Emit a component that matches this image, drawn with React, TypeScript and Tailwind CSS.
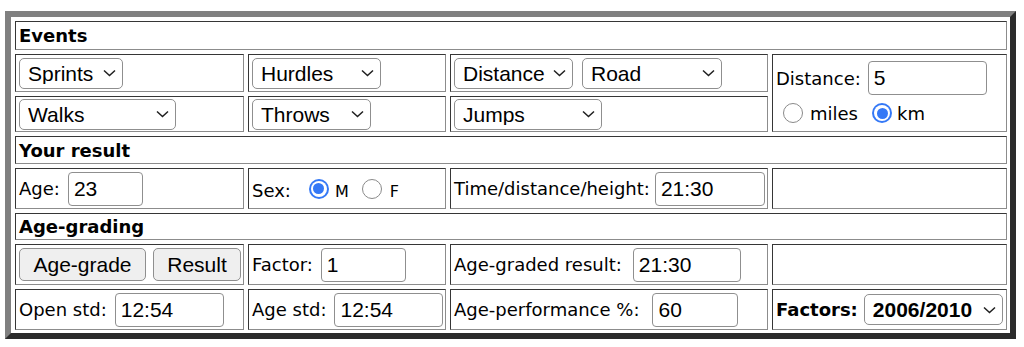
import React from "react";

const LABEL = "font-['DejaVu_Sans',Verdana,sans-serif] text-[18px] text-black whitespace-nowrap";
const CTRL = "font-['Liberation_Sans',Arial,sans-serif] text-[21px] text-black";
const CELL =
  "flex items-center border border-t-[#363636] border-l-[#363636] border-r-[#8c8c8c] border-b-[#8c8c8c] bg-white pl-[3px]";

function Chevron() {
  return (
    <svg
      width="13"
      height="8"
      viewBox="0 0 13 8"
      className="pointer-events-none absolute right-[7px] top-1/2 -translate-y-1/2"
    >
      <polyline points="1,1.5 6.5,6.5 12,1.5" fill="none" stroke="#1f1f1f" strokeWidth="1.5" />
    </svg>
  );
}

function Select({ value, options, className }: { value: string; options: string[]; className: string }) {
  return (
    <span className={`relative inline-flex h-[31px] ${className}`}>
      <select
        defaultValue={value}
        className={`${CTRL} h-full w-full appearance-none rounded-[5px] border border-[#8f8f8f] bg-white pl-[8px] pr-[24px] leading-none outline-none`}
      >
        {options.map((o) => (
          <option key={o}>{o}</option>
        ))}
      </select>
      <Chevron />
    </span>
  );
}

function Field({ value, className }: { value: string; className: string }) {
  return (
    <input
      type="text"
      defaultValue={value}
      className={`${CTRL} h-[34px] rounded-[4px] border border-[#8f8f8f] bg-white px-[5px] outline-none ${className}`}
    />
  );
}

function Radio({ checked }: { checked?: boolean }) {
  if (checked) {
    return (
      <span className="inline-flex h-[20px] w-[20px] shrink-0 items-center justify-center rounded-full bg-[#3478f6]">
        <span className="flex h-[16px] w-[16px] items-center justify-center rounded-full bg-white">
          <span className="h-[11px] w-[11px] rounded-full bg-[#3478f6]" />
        </span>
      </span>
    );
  }
  return <span className="inline-block h-[20px] w-[20px] shrink-0 rounded-full border border-[#8a8a8a] bg-white" />;
}

function Button({ children, className }: { children: React.ReactNode; className: string }) {
  return (
    <button
      type="button"
      className={`${CTRL} h-[33px] rounded-[5px] border border-[#8f8f8f] bg-[#efefef] ${className}`}
    >
      {children}
    </button>
  );
}

export default function App() {
  return (
    <div className="ml-[5px] mt-[11px] inline-block border-[6px] border-t-[#808080] border-l-[#808080] border-r-[#2b2b2b] border-b-[#2b2b2b] bg-white pb-[3px] pl-[4px] pr-[3px] pt-[4px]">
      <div className="grid grid-cols-[229px_198px_318px_235px] grid-rows-[29px_38px_36px_28px_41px_27px_41px_41px] gap-[4px]">
        {/* Events */}
        <div className={`${CELL} col-span-4`}>
          <span className={`${LABEL} font-bold`}>Events</span>
        </div>

        <div className={CELL}>
          <Select value="Sprints" options={["Sprints", "100m", "200m", "400m"]} className="w-[104px]" />
        </div>
        <div className={CELL}>
          <Select value="Hurdles" options={["Hurdles", "110m H", "400m H"]} className="w-[129px]" />
        </div>
        <div className={CELL}>
          <Select value="Distance" options={["Distance", "800m", "1500m", "Mile"]} className="w-[119px]" />
          <Select value="Road" options={["Road", "5 km", "10 km", "Marathon"]} className="ml-[9px] w-[140px]" />
        </div>
        <div className={`${CELL} row-span-2 flex-col !items-start justify-start pt-[6px]`}>
          <div className="flex h-[34px] items-center">
            <span className={LABEL}>Distance:</span>
            <Field value="5" className="ml-[7px] w-[119px]" />
          </div>
          <div className="mt-[7px] flex h-[22px] items-center pl-[7px]">
            <Radio />
            <span className={`${LABEL} ml-[7px]`}>miles</span>
            <span className="ml-[14px] flex items-center">
              <Radio checked />
            </span>
            <span className={`${LABEL} ml-[5px]`}>km</span>
          </div>
        </div>

        <div className={CELL}>
          <Select value="Walks" options={["Walks", "3 km W", "20 km W"]} className="w-[157px]" />
        </div>
        <div className={CELL}>
          <Select value="Throws" options={["Throws", "Shot", "Discus"]} className="w-[119px]" />
        </div>
        <div className={CELL}>
          <Select value="Jumps" options={["Jumps", "High jump", "Long jump"]} className="w-[148px]" />
        </div>

        {/* Your result */}
        <div className={`${CELL} col-span-4`}>
          <span className={`${LABEL} font-bold`}>Your result</span>
        </div>

        <div className={CELL}>
          <span className={LABEL}>Age:</span>
          <Field value="23" className="ml-[8px] w-[75px]" />
        </div>
        <div className={CELL}>
          <span className={`${LABEL} mt-[4px]`}>Sex:</span>
          <span className="ml-[18px] flex items-center">
            <Radio checked />
          </span>
          <span className={`${LABEL} ml-[6px] mt-[6px] !text-[16px]`}>M</span>
          <span className="ml-[13px] flex items-center">
            <Radio />
          </span>
          <span className={`${LABEL} ml-[8px] mt-[6px] !text-[16px]`}>F</span>
        </div>
        <div className={CELL}>
          <span className={LABEL}>Time/distance/height:</span>
          <Field value="21:30" className="ml-[5px] w-[110px]" />
        </div>
        <div className={CELL} />

        {/* Age-grading */}
        <div className={`${CELL} col-span-4`}>
          <span className={`${LABEL} font-bold`}>Age-grading</span>
        </div>

        <div className={CELL}>
          <Button className="w-[127px]">Age-grade</Button>
          <Button className="ml-[7px] w-[88px]">Result</Button>
        </div>
        <div className={CELL}>
          <span className={LABEL}>Factor:</span>
          <Field value="1" className="ml-[8px] w-[85px]" />
        </div>
        <div className={CELL}>
          <span className={LABEL}>Age-graded result:</span>
          <Field value="21:30" className="ml-[11px] w-[108px]" />
        </div>
        <div className={CELL} />

        <div className={CELL}>
          <span className={LABEL}>Open std:</span>
          <Field value="12:54" className="ml-[8px] w-[109px]" />
        </div>
        <div className={CELL}>
          <span className={LABEL}>Age std:</span>
          <Field value="12:54" className="ml-[8px] w-[109px]" />
        </div>
        <div className={CELL}>
          <span className={LABEL}>Age-performance %:</span>
          <Field value="60" className="ml-[13px] w-[86px]" />
        </div>
        <div className={CELL}>
          <span className={`${LABEL} font-bold`}>Factors:</span>
          <Select value="2006/2010" options={["2006/2010", "2002", "1994"]} className="ml-[6px] w-[139px] font-bold [&>select]:font-bold" />
        </div>
      </div>
    </div>
  );
}
